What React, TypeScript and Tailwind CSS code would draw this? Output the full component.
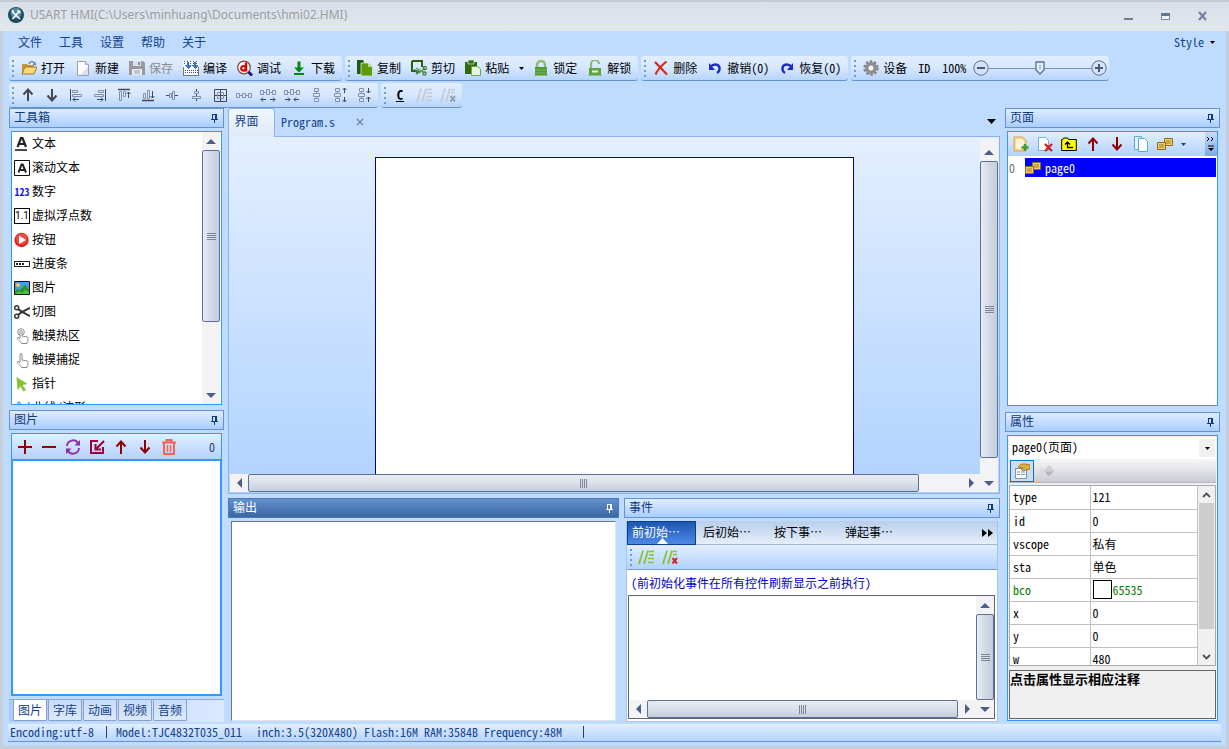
import type { ReactNode } from "react";
import { useState } from "react";

function Svg({ children, w = 16, h = 16, crisp = false }: { children: ReactNode; w?: number; h?: number; crisp?: boolean }) {
  return (
    <svg
      width={w}
      height={h}
      viewBox={`0 0 ${w} ${h}`}
      fill="none"
      aria-hidden="true"
      className="shrink-0"
      shapeRendering={crisp ? "crispEdges" : "auto"}
    >
      {children}
    </svg>
  );
}

/* ---------- main tool bar icons ---------- */
const OpenIcon = () => (
  <Svg>
    <path d="M1 4h5l1 1h6v9H1z" fill="#c9973a" />
    <path d="M1 14 4 7h12l-3 7z" fill="#f8d878" stroke="#8a6420" strokeWidth="0.8" />
    <path d="M8 4c1-3 4-3 5-1" stroke="#5b88c2" strokeWidth="1.500" />
    <path d="m14.600 1.400.4 4-3.600-1z" fill="#5b88c2" />
  </Svg>
);
const NewIcon = () => (
  <Svg>
    <path d="M2.500 1.500h8l3 3v11h-11z" fill="#fdfdff" stroke="#9a9ea8" />
    <path d="M10.500 1.500v3h3" fill="#dfe3ee" stroke="#a7abb5" />
    <path d="M5 15 13 7v8z" fill="#dcdff0" />
  </Svg>
);
const SaveIcon = () => (
  <Svg>
    <path d="M0 1h14l2 2v12H0z" fill="#9a9a9a" />
    <path d="M4 1h8v5H4z" fill="#d9e4f3" />
    <path d="M9 2h2v3H9z" fill="#8a8a8a" />
    <path d="M3 9h10v6H3z" fill="#e8eef8" />
    <path d="M5 11h6M5 13h6" stroke="#9a9a9a" />
  </Svg>
);
const CompileIcon = () => (
  <Svg crisp>
    <path d="M0 1h16v14H0z" fill="#fff" />
    <path d="M1 1.500h14M1 3.500h14" stroke="#444a66" strokeDasharray="1 2" />
    <path d="M4 2h2v4H4zM11 2h2v4h-2z" fill="#3c73d8" />
    <path d="M2 5h6v1L5 9 2 6zM9 5h6v1l-3 3-3-3z" fill="#3c73d8" />
    <path d="M2 10.500h13M2 12.500h13" stroke="#444a66" strokeDasharray="1 1" />
    <path d="M.5 7v8.500h15V7" stroke="#707891" />
  </Svg>
);
const DebugIcon = () => (
  <Svg>
    <circle cx="7" cy="7.500" r="6.300" fill="#fff" stroke="#8e3a34" strokeWidth="1.200" />
    <path d="m11.500 12 3.500 3.500" stroke="#13138c" strokeWidth="2.800" />
    <path d="M9 2.500v9" stroke="#e00000" strokeWidth="2.400" />
    <circle cx="6.500" cy="8.300" r="2.300" stroke="#e00000" strokeWidth="2.200" />
  </Svg>
);
const DownloadIcon = () => (
  <Svg>
    <path d="M6.500 1.500h3v6H13L8 12.500 3 7.500h3.500zM3 13h10v2H3z" fill="#078a07" />
  </Svg>
);
const CopyIcon = () => (
  <Svg>
    <path d="M0 0h6l1 2v12H0z" fill="#1f5a18" />
    <path d="M4 3h7l4.500 4v9H4z" fill="#5c9c0c" stroke="#d9efc0" strokeWidth="0.800" />
    <path d="M11 3v4h4.500" fill="#b7dc82" />
  </Svg>
);
const CutIcon = () => (
  <Svg>
    <path d="M1 1h10v6M1 1v10h4" stroke="#2c5d14" strokeWidth="2" />
    <path d="m5 8 9 5M8 13l6-5" stroke="#5a9a44" strokeWidth="1.400" />
    <circle cx="13.800" cy="8" r="1.600" stroke="#3f7e2c" strokeWidth="1.200" />
    <circle cx="13.500" cy="13.500" r="1.600" stroke="#3f7e2c" strokeWidth="1.200" />
    <path d="m3 9 6 2-3 4z" fill="#3f7e2c" />
  </Svg>
);
const PasteIcon = () => (
  <Svg>
    <path d="M0 2h12v12H0z" fill="#2f6a10" />
    <path d="M3 0h6v4H3z" fill="#2f6a10" stroke="#cfe5c0" strokeWidth="0.800" />
    <path d="M6.500 6.500h6l3 2.500v6.500h-9z" fill="#e8f4dd" stroke="#6fa552" />
  </Svg>
);
const LockIcon = () => (
  <Svg>
    <path d="M4 7V5a4 4 0 0 1 8 0v2" stroke="#8cbd72" strokeWidth="2.400" />
    <path d="M2 7h12v8H2z" fill="#4f9a35" />
    <path d="M2 10h12M2 13h12" stroke="#79b863" />
    <path d="M1 15.500h14" stroke="#8fc07a" />
  </Svg>
);
const UnlockIcon = () => (
  <Svg>
    <path d="M4 8V4a4 4 0 0 1 8 0" stroke="#8cbd72" strokeWidth="2.200" />
    <path d="M2 8h12v7H2z" fill="#5fa544" />
    <path d="M5 10.500h6v2H5z" fill="#e6f3df" />
    <path d="M1 15.500h14" stroke="#8fc07a" />
  </Svg>
);
const DeleteIcon = () => (
  <Svg>
    <path d="m2 2 12 12.500M13.500 1.500C9 5 5 9 2.500 14.500" stroke="#d8281c" strokeWidth="2.200" />
  </Svg>
);
const UndoIcon = () => (
  <Svg>
    <path d="M4 6c5-3 9-1 8.500 3.500-.2 2-1.500 3-2.500 3.500" stroke="#1a2bc8" strokeWidth="2.400" />
    <path d="M2 3v7h6z" fill="#1a2bc8" />
  </Svg>
);
const RedoIcon = () => (
  <Svg>
    <path d="M12 6C7 3 3 5 3.500 9.500c.2 2 1.500 3 2.500 3.500" stroke="#1a2bc8" strokeWidth="2.400" />
    <path d="M14 3v7H8z" fill="#1a2bc8" />
  </Svg>
);
const GearIcon = () => (
  <Svg>
    <circle cx="8" cy="8" r="6.200" stroke="#858585" strokeWidth="3" strokeDasharray="2.400 1.500" />
    <circle cx="8" cy="8" r="4.200" fill="#f3f6fc" stroke="#8e8e8e" strokeWidth="3.400" />
  </Svg>
);

/* ---------- alignment icons ---------- */
const DK = "#44474f";
const BL = "#7f91b3";
const alignIcons: { label: string; art: ReactNode }[] = [
  { label: "上移", art: <path d="M8 14V3M3.500 7.500 8 2.500l4.500 5" stroke={DK} strokeWidth="2" /> },
  { label: "下移", art: <path d="M8 2v11M3.500 8.500l4.500 5 4.500-5" stroke={DK} strokeWidth="2" /> },
  { label: "左对齐", art: <><path d="M2.500 2v12" stroke={DK} /><path d="M4.500 3.500h5v2h-5zM4.500 7.500h9v2h-9z" stroke={BL} /><path d="M5 12.500h6M7 10.500l-2 2 2 2" stroke={DK} /></> },
  { label: "右对齐", art: <><path d="M13.500 2v12" stroke={DK} /><path d="M6.500 3.500h5v2h-5zM2.500 7.500h9v2h-9z" stroke={BL} /><path d="M5 12.500h6M9 10.500l2 2-2 2" stroke={DK} /></> },
  { label: "上对齐", art: <><path d="M2 2.500h12" stroke={DK} strokeWidth="1.500" /><path d="M3.500 4.500h2v9h-2zM7.500 4.500h2v5h-2z" stroke={BL} /><path d="M12.500 5v6M10.500 7l2-2 2 2" stroke={DK} /></> },
  { label: "下对齐", art: <><path d="M2 13.500h12" stroke={DK} strokeWidth="1.500" /><path d="M3.500 6.500h2v5h-2zM7.500 3.500h2v8h-2z" stroke={BL} /><path d="M12.500 4v7M10.500 9l2 2 2-2" stroke={DK} /></> },
  { label: "垂直居中", art: <><path d="M2 8.500h3M11 8.500h3" stroke={DK} /><path d="M5.500 6.500h2v4h-2zM8.500 4.500h2v8h-2z" stroke={BL} /></> },
  { label: "水平居中", art: <><path d="M8.500 2v3M8.500 12v2M8.500 7v2" stroke={DK} /><path d="M6.500 4.500h4v2h-4zM4.500 9.500h8v2h-8z" stroke={BL} /></> },
  { label: "居中", art: <><path d="M2.500 2.500h12v12h-12z" stroke={DK} /><path d="M8.500 3v11M3 8.500h11" stroke={DK} /><path d="M5.500 5.500h6v6h-6z" stroke={BL} /></> },
  { label: "水平等距", art: <><path d="M0 8.500h16" stroke={BL} /><path d="M.5 6.500h3v4h-3zM6.500 6.500h3v4h-3zM12.500 6.500h3v4h-3z" fill="#dbe8fb" stroke={BL} /></> },
  { label: "增加水平间距", art: <><path d="M0 5.500h16" stroke={BL} /><path d="M.5 3.500h3v4h-3zM6.500 2.500h3v5h-3zM12.500 3.500h3v4h-3z" fill="#dbe8fb" stroke={BL} /><path d="M1 12.500h5M3 10.500l-2 2 2 2M10 12.500h5M13 10.500l2 2-2 2" stroke={DK} /></> },
  { label: "减小水平间距", art: <><path d="M0 5.500h16" stroke={BL} /><path d="M.5 3.500h3v4h-3zM6.500 2.500h3v5h-3zM12.500 3.500h3v4h-3z" fill="#dbe8fb" stroke={BL} /><path d="M1 12.500h5M4 10.500l2 2-2 2M10 12.500h5M12 10.500l-2 2 2 2" stroke={DK} /></> },
  { label: "垂直等距", art: <><path d="M8.500 1v14" stroke={BL} /><path d="M6.500 1.500h4v3h-4zM5.500 6.500h6v3h-6zM6.500 11.500h4v3h-4z" fill="#dbe8fb" stroke={BL} /></> },
  { label: "增加垂直间距", art: <><path d="M5.500 1v14" stroke={BL} /><path d="M3.500 1.500h4v3h-4zM2.500 6.500h6v3h-6zM3.500 11.500h4v3h-4z" fill="#dbe8fb" stroke={BL} /><path d="M12.500 1v5M10.500 3l2-2 2 2M12.500 10v5M10.500 13l2 2 2-2" stroke={DK} /></> },
  { label: "减小垂直间距", art: <><path d="M5.500 1v14" stroke={BL} /><path d="M3.500 1.500h4v3h-4zM2.500 6.500h6v3h-6zM3.500 11.500h4v3h-4z" fill="#dbe8fb" stroke={BL} /><path d="M12.500 1v5M10.500 4l2 2 2-2M12.500 10v5M10.500 12l2-2 2 2" stroke={DK} /></> },
];

function CommentIcon({ color, bars, cross }: { color: string; bars: string; cross?: string }) {
  return (
    <Svg>
      <path d="M1 15 5 1.500M6 15l4-13.500" stroke={color} strokeWidth="1.800" />
      <path d={cross ? "M11 2.500h4M11 5.500h4" : "M11 2.500h5M11 6h5M10 9.500h6M10 13.500h6"} stroke={bars} strokeWidth="1.600" />
      {cross && <path d="m10.500 9 4.500 5.500M15 9l-4.500 5.500" stroke={cross} strokeWidth="2" />}
    </Svg>
  );
}

/* ---------- tool box icons ---------- */
const tools: { name: string; icon: ReactNode }[] = [
  { name: "文本", icon: <Svg><path d="M3.500 11 7 2h1.500L12 11M5 8h5.500" stroke="#222" strokeWidth="2.200" /><path d="M1 14h12" stroke="#111" strokeWidth="1.500" /></Svg> },
  { name: "滚动文本", icon: <Svg><path d="M.5.5h15v15H.5z" fill="#fff" stroke="#111" /><path d="m4.500 12.500 3-8h1.200l3.300 8M6 10h5" stroke="#222" strokeWidth="2" /></Svg> },
  { name: "数字", icon: <span className="flex w-4 shrink-0 justify-center text-[10px] font-bold leading-4 text-[#1010ff]">123</span> },
  { name: "虚拟浮点数", icon: <span className="flex h-4 w-4 shrink-0 items-center justify-center border border-black font-['Roboto',sans-serif] text-[10px] text-black">1.1</span> },
  { name: "按钮", icon: <Svg><circle cx="7.500" cy="8" r="7.200" fill="#d8251f" /><circle cx="7.500" cy="7" r="5.500" fill="#ef4d43" /><path d="M5 3.500v8.500L12 8z" fill="#fff" /></Svg> },
  { name: "进度条", icon: <Svg crisp><path d="M.5 5.500h15v5H.5z" fill="#fff" stroke="#222" /><path d="M2 7h2v2H2zM5 7h2v2H5zM8 7h2v2H8z" fill="#222" /></Svg> },
  { name: "图片", icon: <Svg><path d="M.5 1.500h15v13H.5z" fill="#3da0ef" stroke="#111" /><circle cx="4" cy="5" r="2" fill="#ffc062" /><path d="M1 14v-3l3-2 2 1 5-5 4 5v4z" fill="#2f8f2a" /><path d="m1 14 4-3 3 2 3-3 4 2v2z" fill="#4cc23a" /></Svg> },
  { name: "切图", icon: <Svg><circle cx="2.700" cy="3.700" r="2" stroke="#333" strokeWidth="1.500" /><circle cx="2.700" cy="12.300" r="2" stroke="#333" strokeWidth="1.500" /><path d="M4 5c3 2.500 6 4 12 7M4 11c3-2.500 6-4 12-7" stroke="#333" strokeWidth="2" /></Svg> },
  { name: "触摸热区", icon: <Svg><circle cx="7" cy="4" r="3.300" stroke="#8c8c8c" /><path d="M6 10V3.500a1 1 0 0 1 2 0V8l5 1c1 .3 1 1 1 2 0 2-1 2.500-1 4.500H7.500C6 13 4 12 3 10c1-1 2-.5 3 1" fill="#fff" stroke="#8c8c8c" /></Svg> },
  { name: "触摸捕捉", icon: <Svg><path d="M6 10V2.500a1 1 0 0 1 2 0V8l5 1c1 .3 1 1 1 2 0 2-1 2.500-1 4.500H7.500C6 13 4 12 3 10c1-1 2-.5 3 1" fill="#fff" stroke="#8c8c8c" /></Svg> },
  { name: "指针", icon: <Svg><path d="m2.500 1 11 7-5 1 3.500 5-2.500 1.500L6.500 10.500 3.500 14z" fill="#86c232" /></Svg> },
  { name: "曲线/波形", icon: <Svg><path d="M1 15C4-4 6 2 8 8s4 8 7-6" stroke="#5a9be0" strokeWidth="1.600" /></Svg> },
];

/* ---------- small shared parts ---------- */
function Grip() {
  return (
    <span className="flex w-[7px] shrink-0 flex-col items-center gap-[3px]" aria-hidden="true">
      <i className="size-[2px] bg-[#6a9ade]" />
      <i className="size-[2px] bg-[#6a9ade]" />
      <i className="size-[2px] bg-[#6a9ade]" />
      <i className="size-[2px] bg-[#6a9ade]" />
    </span>
  );
}

function Bar({ children, label }: { children: ReactNode; label: string }) {
  return (
    <div
      role="toolbar"
      aria-label={label}
      className="flex h-[25px] items-center rounded-[3px] border-b border-[#6593cf] bg-gradient-to-b from-[#e1eeff] via-[#d6e7ff] to-[#b6d4fd] pr-[2px]"
    >
      <Grip />
      {children}
    </div>
  );
}

function Tool({ icon, text, muted = false }: { icon: ReactNode; text: string; muted?: boolean }) {
  return (
    <button type="button" disabled={muted} className={`flex items-center gap-1 px-[5px] ${muted ? "text-[#8d8d8d]" : "text-black"}`}>
      {icon}
      {text}
    </button>
  );
}

function IconButton({ label, children }: { label: string; children: ReactNode }) {
  return (
    <button type="button" aria-label={label} className="flex h-6 w-6 shrink-0 items-center justify-center">
      {children}
    </button>
  );
}

function PanelHeader({ title, active = false }: { title: string; active?: boolean }) {
  return (
    <header
      className={`flex h-5 shrink-0 items-center justify-between border pl-1 pr-[5px] ${
        active
          ? "border-[#4a78b8] bg-gradient-to-b from-[#6391cd] to-[#3b67a5] text-white"
          : "border-[#6593cf] bg-gradient-to-b from-[#dfecff] to-[#abcefd] text-[#0f3a7d]"
      }`}
    >
      <h2 className="pb-[2px]">{title}</h2>
      <button type="button" aria-label={`固定${title}`}>
        <Svg w={7} h={9} crisp>
          <path d="M1 0h5v1H1zM1 1h1v4H1zM4 1h2v4H4zM0 5h7v1H0zM3 6h1v3H3z" fill="currentColor" />
        </Svg>
      </button>
    </header>
  );
}

function Scroll({ vertical = false, thumb }: { vertical?: boolean; thumb: number }) {
  const lines = [0, 1, 2, 3];
  return vertical ? (
    <div className="flex w-[18px] shrink-0 flex-col bg-[#f3f3f5]">
      <button type="button" aria-label="向上滚动" className="flex h-[18px] shrink-0 items-center justify-center">
        <Svg w={10} h={5}><path d="M0 5 5 0l5 5z" fill="#4d5f88" /></Svg>
      </button>
      <div className="min-h-0 flex-1">
        <div
          className="flex flex-col items-center justify-center gap-px rounded-[2px] border border-[#5c7099] bg-gradient-to-r from-[#e9ebf2] via-[#d3dae6] to-[#c3cedd]"
          style={{ height: `${thumb}%` }}
        >
          {lines.map((n) => <i key={n} className="h-px w-[9px] bg-[#7d8796]" />)}
        </div>
      </div>
      <button type="button" aria-label="向下滚动" className="flex h-[18px] shrink-0 items-center justify-center">
        <Svg w={10} h={5}><path d="M0 0h10L5 5z" fill="#4d5f88" /></Svg>
      </button>
    </div>
  ) : (
    <div className="flex h-[18px] shrink-0 bg-[#f3f3f5]">
      <button type="button" aria-label="向左滚动" className="flex w-[18px] shrink-0 items-center justify-center">
        <Svg w={5} h={10}><path d="M5 0v10L0 5z" fill="#4d5f88" /></Svg>
      </button>
      <div className="min-w-0 flex-1">
        <div
          className="flex h-full items-center justify-center gap-px rounded-[2px] border border-[#5c7099] bg-gradient-to-b from-[#e9ebf2] via-[#dbe0e9] to-[#c3cedd]"
          style={{ width: `${thumb}%` }}
        >
          {lines.map((n) => <i key={n} className="h-[9px] w-px bg-[#7d8796]" />)}
        </div>
      </div>
      <button type="button" aria-label="向右滚动" className="flex w-[18px] shrink-0 items-center justify-center">
        <Svg w={5} h={10}><path d="M0 0v10l5-5z" fill="#4d5f88" /></Svg>
      </button>
    </div>
  );
}

const RedUp = () => <Svg><path d="M8 15V3M3.500 7.500 8 2.500l4.500 5" stroke="#900000" strokeWidth="2" /></Svg>;
const RedDown = () => <Svg><path d="M8 1v12M3.500 8.500l4.500 5 4.500-5" stroke="#900000" strokeWidth="2" /></Svg>;
const PageIcon = () => (
  <Svg>
    <path d="M7.500 2.500h8v7h-8z" fill="#f0cf68" stroke="#8d6f24" />
    <path d="M.5 6.500h8v7h-8z" fill="#f0cf68" stroke="#8d6f24" />
    <path d="M9 5h5M9 7h5M2 9h5M2 11h5" stroke="#a07a2c" />
  </Svg>
);

/* ---------- top ---------- */
function TitleBar() {
  return (
    <div className="flex h-[31px] shrink-0 items-center border-t-2 border-[#c3cad5] bg-gradient-to-b from-[#d9e0ea] to-[#e2e7ed] pb-[4px] pl-[8px] pr-[21px] text-[#9c9da0]">
      <Svg>
        <circle cx="8" cy="8" r="8" fill="#1d4b5c" />
        <circle cx="8" cy="6" r="5.500" fill="#4f8798" />
        <path d="m4.500 12 7-8M4 4.500l8 7.500" stroke="#f4fbff" strokeWidth="1.700" />
        <path d="M3 3.500 6 3 5.500 6zM10 2.500l3 2.500-1.500 1.500L9 4z" fill="#f4fbff" />
      </Svg>
      <h1 className="ml-[6px] font-['Noto_Sans',sans-serif] text-[12px]">{"USART HMI(C:\\Users\\minhuang\\Documents\\hmi02.HMI)"}</h1>
      <div className="ml-auto flex gap-[26px] pt-[3px]">
        <button type="button" aria-label="最小化"><Svg w={11} h={12} crisp><path d="M1 8h9v2H1z" fill="#757c88" /></Svg></button>
        <button type="button" aria-label="最大化"><Svg w={11} h={12} crisp><path d="M1.500 3.500h8v6h-8z" fill="#eef2f6" stroke="#7d8ea5" /><path d="M1 3h9v3H1z" fill="#66788f" /></Svg></button>
        <button type="button" aria-label="关闭"><Svg w={11} h={12}><path d="m2 2 7 8M9 2l-7 8" stroke="#76839a" strokeWidth="2.200" /></Svg></button>
      </div>
    </div>
  );
}

function Zoom() {
  const [zoom, setZoom] = useState(50);
  return (
    <div className="flex items-center pl-px">
      <button type="button" aria-label="缩小">
        <Svg><circle cx="8" cy="8" r="7.200" fill="#d3e3f9" stroke="#5d6f92" /><path d="M4 8h8" stroke="#4d5a76" strokeWidth="2" /></Svg>
      </button>
      <div className="relative flex h-4 w-[102px] items-center">
        <span className="h-px w-full bg-[#7b92b5]" />
        <input
          type="range"
          aria-label="缩放"
          value={zoom}
          onChange={(e) => setZoom(Number(e.target.value))}
          className="absolute inset-0 w-full cursor-pointer opacity-0"
        />
        <span className="pointer-events-none absolute -translate-x-1/2" style={{ left: `${zoom}%` }}>
          <Svg w={10} h={14}><path d="M1 1h8v8l-4 4-4-4z" fill="#e3eefb" stroke="#57709c" strokeWidth="1.300" /><path d="M5 4v5" stroke="#8ba0c2" /></Svg>
        </span>
      </div>
      <button type="button" aria-label="放大">
        <Svg><circle cx="8" cy="8" r="7.200" fill="#d3e3f9" stroke="#5d6f92" /><path d="M4 8h8M8 4v8" stroke="#4d5a76" strokeWidth="2" /></Svg>
      </button>
    </div>
  );
}

function Toolbars() {
  return (
    <div className="flex flex-col gap-[2px] pl-[6px]">
      <div className="flex gap-[3px]">
        <Bar label="文件">
          <Tool icon={<OpenIcon />} text="打开" />
          <Tool icon={<NewIcon />} text="新建" />
          <Tool icon={<SaveIcon />} text="保存" muted />
          <Tool icon={<CompileIcon />} text="编译" />
          <Tool icon={<DebugIcon />} text="调试" />
          <Tool icon={<DownloadIcon />} text="下载" />
        </Bar>
        <Bar label="编辑">
          <Tool icon={<CopyIcon />} text="复制" />
          <Tool icon={<CutIcon />} text="剪切" />
          <Tool icon={<PasteIcon />} text="粘贴" />
          <button type="button" aria-label="粘贴选项" className="flex w-[14px] justify-center"><Svg w={5} h={3}><path d="M0 0h5L2.500 3z" fill="#000" /></Svg></button>
          <Tool icon={<LockIcon />} text="锁定" />
          <Tool icon={<UnlockIcon />} text="解锁" />
        </Bar>
        <Bar label="撤销">
          <Tool icon={<DeleteIcon />} text="删除" />
          <Tool icon={<UndoIcon />} text="撤销(0)" />
          <Tool icon={<RedoIcon />} text="恢复(0)" />
        </Bar>
        <Bar label="设备">
          <Tool icon={<GearIcon />} text="设备" />
          <button type="button" className="px-[6px] text-black">ID</button>
          <span className="px-[6px] text-black">100%</span>
          <Zoom />
        </Bar>
      </div>
      <div className="flex gap-[3px]">
        <Bar label="对齐">
          {alignIcons.map((a) => <IconButton key={a.label} label={a.label}><Svg>{a.art}</Svg></IconButton>)}
        </Bar>
        <Bar label="注释">
          <IconButton label="代码"><span className="border-b border-black px-px text-[13px] leading-[13px] font-bold text-black">C</span></IconButton>
          <IconButton label="注释所选"><CommentIcon color="#c3cbd6" bars="#c3cbd6" /></IconButton>
          <IconButton label="取消注释"><CommentIcon color="#c3cbd6" bars="#c3cbd6" cross="#9aa0aa" /></IconButton>
        </Bar>
      </div>
    </div>
  );
}

/* ---------- left ---------- */
function LeftColumn() {
  const tabs = ["图片", "字库", "动画", "视频", "音频"];
  return (
    <div className="flex w-[215px] shrink-0 flex-col gap-[5px]">
      <section className="flex min-h-0 flex-[297_1_0%] flex-col">
        <PanelHeader title="工具箱" />
        <div className="mx-[2px] mt-[3px] flex min-h-0 flex-1 border border-[#3399ff] bg-white pr-px">
          <ul className="min-h-0 flex-1 overflow-hidden text-black">
            {tools.map((t) => (
              <li key={t.name} className="flex h-6 items-center gap-[2px] pl-[2px]">
                {t.icon}
                <span className="pb-[2px]">{t.name}</span>
              </li>
            ))}
          </ul>
          <Scroll vertical thumb={73} />
        </div>
      </section>
      <section className="flex min-h-0 flex-[312_1_0%] flex-col">
        <PanelHeader title="图片" />
        <div className="mx-[2px] mt-[3px] flex h-[26px] shrink-0 items-center border border-b-0 border-[#3399ff] bg-gradient-to-b from-[#e1eeff] to-[#b3d2fd] pl-px pr-[6px]">
          <IconButton label="添加"><Svg><path d="M8 1v14M1 8h14" stroke="#900000" strokeWidth="2" /></Svg></IconButton>
          <IconButton label="移除"><Svg><path d="M1 8h14" stroke="#900000" strokeWidth="2" /></Svg></IconButton>
          <IconButton label="替换"><Svg><path d="M2 7a6 6 0 0 1 11-3M14 9a6 6 0 0 1-11 3" stroke="#8e2ba8" strokeWidth="1.800" /><path d="M15 1v5.500H9.500zM1 15V9.500h5.500z" fill="#8e2ba8" /></Svg></IconButton>
          <IconButton label="导入"><Svg><path d="M9 2H2v12h12V8M15 2 7 10M6.500 5v5.500H12" stroke="#a00038" strokeWidth="2" /></Svg></IconButton>
          <IconButton label="上移"><RedUp /></IconButton>
          <IconButton label="下移"><RedDown /></IconButton>
          <IconButton label="清空"><Svg><path d="M1 3.500h14M5.500 3V1h5v2M3 4v11h10V4" stroke="#f8604f" strokeWidth="2" /><path d="M6.500 6v7M9.500 6v7" stroke="#f8604f" strokeWidth="1.500" /></Svg></IconButton>
          <span className="ml-auto">0</span>
        </div>
        <div className="mx-[2px] min-h-0 flex-1 border-2 border-[#3399ff] bg-white" />
        <div role="tablist" className="mt-[3px] flex h-[23px] shrink-0 gap-px border-t border-[#8ba7d3] bg-gradient-to-r from-[#a9cbfa] to-[#dbe9fd] pl-[4px]">
          {tabs.map((t, i) => (
            <button
              key={t}
              type="button"
              role="tab"
              aria-selected={i === 0}
              className={`h-[21px] rounded-b-[2px] border border-t-0 border-[#8ba0c8] px-[4px] ${i === 0 ? "bg-white" : "bg-gradient-to-b from-[#c7dcfa] to-[#dce9fb]"}`}
            >
              {t}
            </button>
          ))}
        </div>
      </section>
    </div>
  );
}

/* ---------- centre ---------- */
function Editor() {
  return (
    <section className="flex min-h-0 flex-[386_1_0%] flex-col">
      <div role="tablist" className="flex h-[29px] shrink-0">
        <button type="button" role="tab" aria-selected="true" className="w-[47px] rounded-t-[3px] border border-b-0 border-[#8db2e3] bg-gradient-to-b from-[#f1f6fd] to-[#dfe9f7] pb-[4px] pr-[10px]">界面</button>
        <div className="flex flex-1 items-center border-b border-[#8db2e3] pb-px pl-[6px] pr-[4px]">
          <button type="button" role="tab" aria-selected="false">Program.s</button>
          <button type="button" aria-label="关闭 Program.s" className="ml-[21px]"><Svg w={8} h={8}><path d="m1 1 6 6M7 1 1 7" stroke="#6284b8" strokeWidth="1.200" /></Svg></button>
          <button type="button" aria-label="更多标签" className="ml-auto"><Svg w={9} h={5}><path d="M0 0h9L4.500 5z" fill="#000" /></Svg></button>
        </div>
      </div>
      <div className="flex min-h-0 flex-1 border border-t-0 border-[#8db2e3] bg-gradient-to-b from-[#e3efff] to-[#b0d2ff] px-px pb-px pt-[2px]">
        <div className="flex min-h-0 min-w-0 flex-1 flex-col">
          <div className="min-h-0 flex-1 overflow-hidden pl-[145px] pt-[18px]">
            <div className="h-full w-[479px] border border-b-0 border-[#0000a8] bg-white" />
          </div>
          <Scroll thumb={94} />
        </div>
        <div className="flex bg-[#f3f3f5] pt-[4px]">
          <Scroll vertical thumb={95} />
        </div>
      </div>
    </section>
  );
}

function Events() {
  const tabs = ["后初始…", "按下事…", "弹起事…"];
  return (
    <section className="flex w-[376px] shrink-0 flex-col">
      <PanelHeader title="事件" />
      <div className="mx-[2px] mt-[3px] flex min-h-0 flex-1 flex-col border border-t-0 border-[#a9c4e8] bg-white">
        <div role="tablist" className="flex h-6 shrink-0 items-center border-b border-[#a8b8cc] bg-gradient-to-b from-[#b9cfeb] to-[#e6eefa] text-black">
          <button type="button" role="tab" aria-selected="true" className="relative h-6 w-[69px] border border-[#0b3d91] bg-gradient-to-b from-[#1c57b0] to-[#4c8ae6] pb-[2px] pl-[4px] text-left text-white">
            前初始…
            <span className="absolute bottom-0 left-[29px]"><Svg w={11} h={6}><path d="M0 6 5.500 0 11 6z" fill="#fff" /></Svg></span>
          </button>
          {tabs.map((t) => <button key={t} type="button" role="tab" aria-selected="false" className="w-[71px] pb-[2px] pl-[7px] text-left">{t}</button>)}
          <button type="button" aria-label="更多事件" className="ml-auto pr-[4px]"><Svg w={11} h={8}><path d="M0 0v8l5-4zM6 0v8l5-4z" fill="#000" /></Svg></button>
        </div>
        <div role="toolbar" aria-label="事件注释" className="flex h-[25px] shrink-0 items-center border-b border-[#6fa0de] bg-gradient-to-b from-[#e1eeff] to-[#b3d2fd]">
          <Grip />
          <IconButton label="注释"><CommentIcon color="#86c232" bars="#86c232" /></IconButton>
          <IconButton label="取消注释"><CommentIcon color="#86c232" bars="#86c232" cross="#e02020" /></IconButton>
        </div>
        <p className="h-[25px] shrink-0 pl-[4px] leading-[25px] text-[#0000c8]">(前初始化事件在所有控件刷新显示之前执行)</p>
        <div className="mr-[2px] mb-[2px] ml-px flex min-h-0 flex-1 border border-[#60646c]">
          <div className="flex min-w-0 flex-1 flex-col">
            <textarea aria-label="事件代码" className="min-h-0 w-full flex-1 resize-none bg-white outline-none" />
            <Scroll thumb={100} />
          </div>
          <Scroll vertical thumb={100} />
        </div>
      </div>
    </section>
  );
}

function Centre() {
  return (
    <div className="flex min-w-0 flex-1 flex-col gap-[4px]">
      <Editor />
      <div className="flex min-h-0 flex-[224_1_0%] gap-[5px]">
        <section className="flex min-w-0 flex-1 flex-col">
          <PanelHeader title="输出" active />
          <div className="mx-[3px] mt-[3px] mb-px min-h-0 flex-1 border border-b-[#dde3ea] border-l-[#70747c] border-r-[#dde3ea] border-t-[#70747c] bg-white" />
        </section>
        <Events />
      </div>
    </div>
  );
}

/* ---------- right ---------- */
const props: [string, string][] = [
  ["type", "121"],
  ["id", "0"],
  ["vscope", "私有"],
  ["sta", "单色"],
  ["bco", "65535"],
  ["x", "0"],
  ["y", "0"],
  ["w", "480"],
];

function RightColumn() {
  return (
    <div className="flex w-[215px] shrink-0 flex-col gap-[6px]">
      <section className="flex min-h-0 flex-[298_1_0%] flex-col">
        <PanelHeader title="页面" />
        <div className="mx-[2px] mt-[3px] flex min-h-0 flex-1 flex-col border border-[#3399ff] bg-white">
          <div role="toolbar" aria-label="页面" className="flex h-6 shrink-0 items-center bg-gradient-to-b from-[#e1eeff] to-[#b3d2fd] pl-px">
            <IconButton label="新增页面"><Svg><path d="M1 1h8l4 3v11H1z" fill="#fbd48d" stroke="#e0a550" /><path d="M3 3h6l2 2v8H3z" fill="#fff3d8" /><path d="M12 8v7M8.500 11.500h7" stroke="#3d9c2c" strokeWidth="2.600" /></Svg></IconButton>
            <IconButton label="删除页面"><Svg><path d="M1.500 1.500h7l3 3v10h-10z" fill="#fff" stroke="#6fb3dd" /><path d="m8 8 7 7M15 8l-7 7" stroke="#c81e1e" strokeWidth="2.200" /></Svg></IconButton>
            <IconButton label="上级"><Svg><path d="M.7 3.500h1l1-1.500h4l1 1.500h7.600v11H.7z" fill="#ffff00" stroke="#000" /><path d="M6.500 6v5.500H12M4 8.500 6.500 6 9 8.500" stroke="#000" strokeWidth="1.300" /></Svg></IconButton>
            <IconButton label="上移"><RedUp /></IconButton>
            <IconButton label="下移"><RedDown /></IconButton>
            <IconButton label="复制页面"><Svg><path d="M1.500.5h7v13h-7z" fill="#e4f6ff" stroke="#58a9d4" /><path d="M5.500 2.500h6l3 3v10h-9z" fill="#fff" stroke="#58a9d4" /></Svg></IconButton>
            <IconButton label="页面类型"><PageIcon /></IconButton>
            <button type="button" aria-label="页面类型选项" className="ml-[4px]"><Svg w={5} h={3}><path d="M0 0h5L2.500 3z" fill="#15428b" /></Svg></button>
            <button type="button" aria-label="更多" className="ml-auto flex h-6 w-[12px] items-center justify-center bg-gradient-to-b from-[#c5dcfb] to-[#7ea9e3]">
              <Svg w={8} h={16}><path d="m0 1 2 2-2 2M4 1l2 2-2 2M1 10h6" stroke="#000" /><path d="M1 12h6l-3 3z" fill="#000" /></Svg>
            </button>
          </div>
          <ul className="pt-[2px] pr-px">
            <li className="flex h-[19px] items-center">
              <span className="w-[17px] shrink-0 pl-px text-[#707070]">0</span>
              <span className="flex h-full flex-1 items-center gap-[4px] bg-[#0000ff] text-white"><PageIcon />page0</span>
            </li>
          </ul>
        </div>
      </section>
      <section className="flex min-h-0 flex-[310_1_0%] flex-col">
        <PanelHeader title="属性" />
        <div className="mx-[2px] mt-[3px] mb-px flex min-h-0 flex-1 flex-col border border-[#3399ff] bg-[#f0f0f0] p-px">
          <div className="relative flex h-[22px] shrink-0 bg-white">
            <select aria-label="控件" className="w-full appearance-none bg-white pb-[2px] pl-[3px] text-black outline-none">
              <option>page0(页面)</option>
            </select>
            <span className="pointer-events-none absolute inset-y-[2px] right-px flex w-4 items-center justify-center bg-[#f0f0f0]"><Svg w={5} h={3}><path d="M0 0h5L2.500 3z" fill="#000" /></Svg></span>
          </div>
          <div className="flex h-6 shrink-0 items-center gap-[6px] border-b border-[#b5b6bb] bg-gradient-to-b from-[#f7f7f9] to-[#cbccd6] pl-px">
            <button type="button" aria-label="属性页" className="flex h-[22px] w-6 items-center justify-center border border-[#0078d7] bg-[#cfdcec]">
              <Svg><path d="M1.500 5.500h11v10h-11z" fill="#fff" stroke="#7c8fb4" /><path d="M3 9h3M7 9h4M3 11.500h3M7 11.500h4" stroke="#7c8fb4" /><path d="m4 4 3-3h5l4 1v4l-4 1-3 1-2-2 2-1z" fill="#dcae3c" stroke="#8d6f24" strokeWidth="0.800" /></Svg>
            </button>
            <button type="button" aria-label="事件页" disabled><Svg><path d="m9 2.500 5 5.500-5 5.500L4 8z" fill="#b5b5bb" /><path d="M9 2.500 14 8l-5 1-5-1z" fill="#cdcdd2" /><path d="M0 6h3M1 8h3M0 10h3" stroke="#d2d2d8" /></Svg></button>
          </div>
          <div className="mt-[2px] flex min-h-0 flex-1 border border-[#a9a9a9] bg-white">
            <div className="min-h-0 flex-1 overflow-hidden">
              <table className="w-full table-fixed border-collapse text-black">
                <colgroup><col className="w-[80px]" /><col /></colgroup>
                <tbody>
                  {props.map(([k, v]) => (
                    <tr key={k} className={`h-[23px] border-b border-[#c0c0c0] ${k === "bco" ? "text-[#008000]" : ""}`}>
                      <th scope="row" className="border-r border-[#c0c0c0] pl-[3px] text-left font-normal">{k}</th>
                      <td className="border-r border-[#c0c0c0] pl-[2px]">
                        <span className="flex items-center gap-px">
                          {k === "bco" && <i className="h-[19px] w-[19px] border border-black bg-white" />}
                          {v}
                        </span>
                      </td>
                    </tr>
                  ))}
                </tbody>
              </table>
            </div>
            <div className="flex w-[17px] shrink-0 flex-col bg-[#f0f0f0] px-px">
              <button type="button" aria-label="向上" className="flex h-[17px] items-center justify-center"><Svg w={9} h={6}><path d="m1 5 3.500-3.500L8 5" stroke="#505050" strokeWidth="1.800" /></Svg></button>
              <div className="min-h-0 flex-1"><div className="h-[87%] bg-[#cdcdcd]" /></div>
              <button type="button" aria-label="向下" className="flex h-[17px] items-center justify-center"><Svg w={9} h={6}><path d="M1 1l3.500 3.500L8 1" stroke="#505050" strokeWidth="1.800" /></Svg></button>
            </div>
          </div>
          <p className="mt-[4px] h-[49px] shrink-0 border border-[#646464] text-[13px] leading-4 font-bold text-black">点击属性显示相应注释</p>
        </div>
      </section>
    </div>
  );
}

export default function App() {
  const menus = ["文件", "工具", "设置", "帮助", "关于"];
  return (
    <div
      lang="zh-CN"
      className="flex h-screen min-h-[600px] flex-col overflow-hidden bg-[#bfdbff] font-['Noto_Sans_Mono_CJK_SC','Noto_Sans_CJK_SC',sans-serif] text-[12px] leading-4 text-[#15428b]"
    >
      <TitleBar />
      <div className="flex min-h-0 flex-1 flex-col border-x-[3px] border-b-[3px] border-[#c5ced9]">
        <nav className="flex h-[25px] shrink-0 items-center gap-[17px] pb-[3px] pl-[15px] pr-[11px]">
          {menus.map((m) => <button key={m} type="button">{m}</button>)}
          <button type="button" className="ml-auto flex items-center gap-[6px]">Style <Svg w={5} h={3}><path d="M0 0h5L2.500 3z" fill="#000" /></Svg></button>
        </nav>
        <Toolbars />
        <main className="flex min-h-0 flex-1 px-[6px]">
          <LeftColumn />
          <div className="w-[4px] shrink-0" />
          <Centre />
          <div className="w-[5px] shrink-0" />
          <RightColumn />
        </main>
        <footer className="mx-[5px] mt-[2px] mb-[4px] flex h-[18px] shrink-0 items-center whitespace-pre border-b border-[#6593cf] bg-gradient-to-b from-[#e1eeff] to-[#b6d4fd] pb-[2px] pl-[2px]">
          <span>Encoding:utf-8</span>
          <i className="ml-[12px] mr-[9px] h-3 w-px bg-[#15428b]" />
          <span>Model:TJC4832T035_011</span>
          <span className="ml-[14px]">inch:3.5(320X480) Flash:16M RAM:3584B Frequency:48M</span>
          <i className="ml-[21px] h-3 w-px bg-[#15428b]" />
        </footer>
      </div>
    </div>
  );
}
